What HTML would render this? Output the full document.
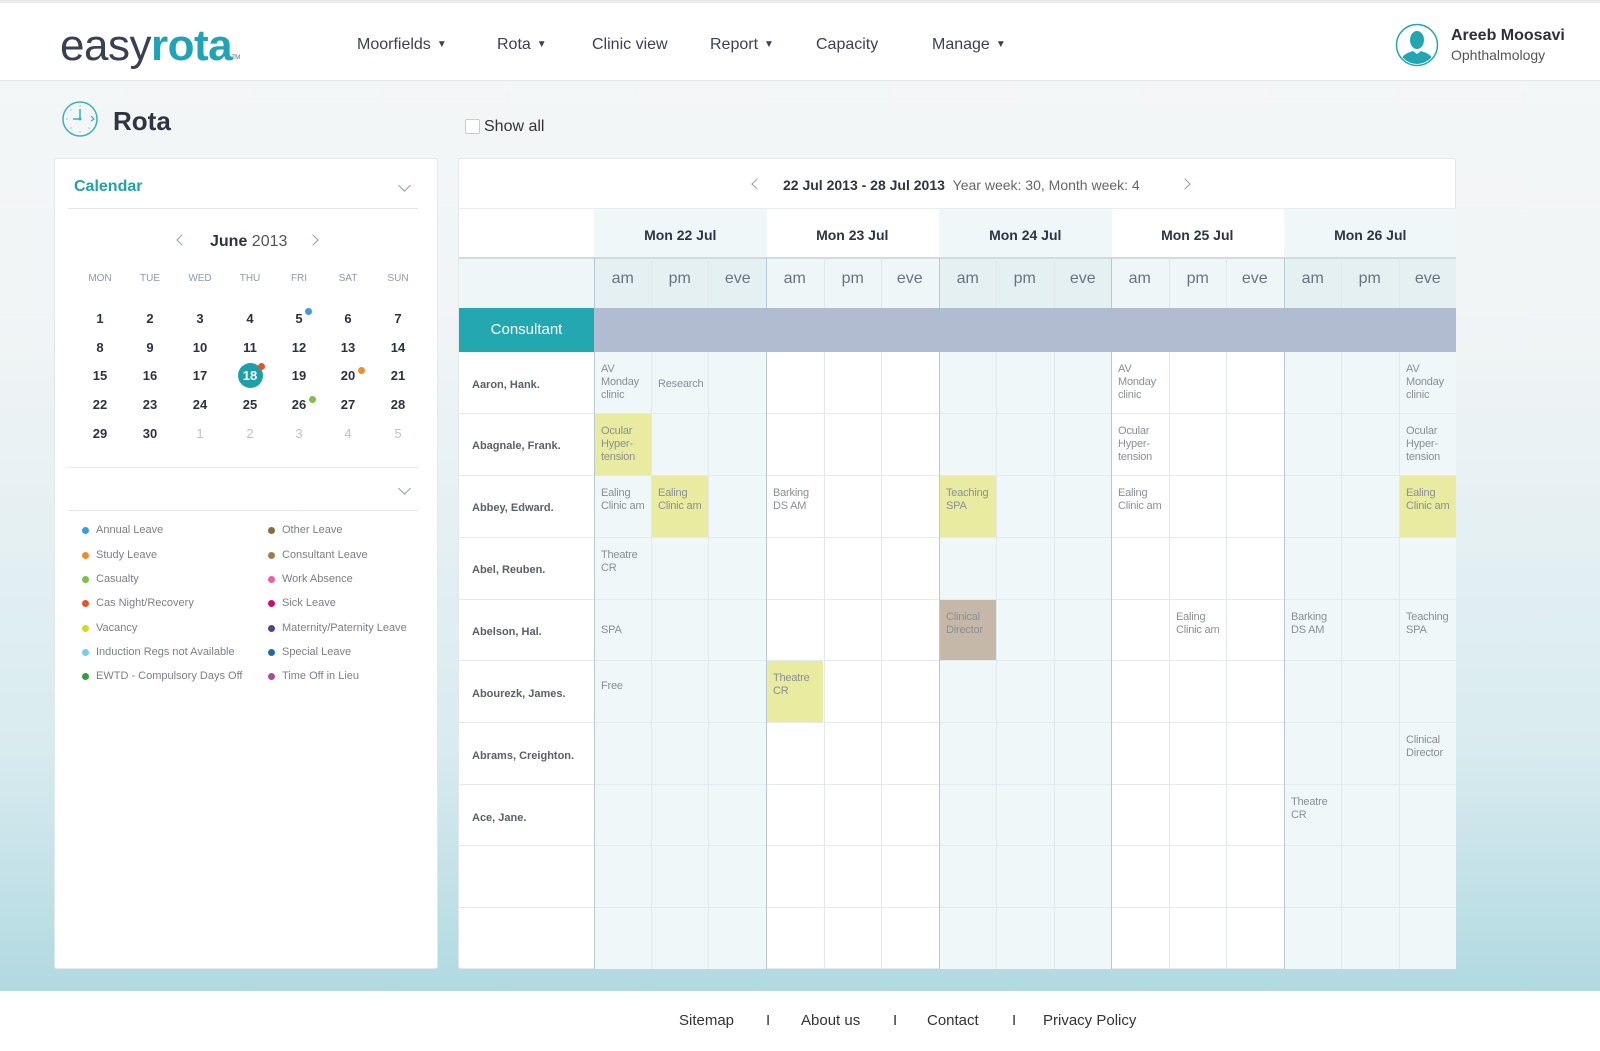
<!DOCTYPE html>
<html><head><meta charset="utf-8"><style>
*{margin:0;padding:0;box-sizing:border-box}
body{width:1600px;height:1051px;overflow:hidden;font-family:"Liberation Sans",Arial,sans-serif;background:linear-gradient(#f4f6f7 0px,#f2f5f6 300px,#d8ebef 750px,#b1d9e1 991px);position:relative;color:#333}
.a{position:absolute}
#top{left:0;top:0;width:1600px;height:3px;background:#e9ecee}
#hdr{left:0;top:3px;width:1600px;height:78px;background:#fff;border-bottom:1px solid #e3e7ea}
.nav{top:36px;font-size:16px;color:#3c4150;white-space:nowrap}
.nav i{font-style:normal;font-size:10px;margin-left:6px;position:relative;top:-2px}
.panel{background:#fff;border:1px solid #e2e8eb;border-radius:3px}
.dw{font-size:10px;color:#8d9aaa;width:40px;text-align:center;top:273px}
.dn{font-size:13px;color:#2d3240;width:40px;text-align:center;font-weight:bold}
.dn.g{color:#bcc2c8;font-weight:normal}
.dot{width:7px;height:7px;border-radius:50%}
.lg{font-size:11px;color:#7a8088;white-space:nowrap}
.lg b{position:absolute;left:-14px;top:3px;width:7px;height:7px;border-radius:50%}
.c{font-size:11px;line-height:13px;color:#8a8f95;padding:11px 3px 0 6px;overflow:hidden;letter-spacing:-0.2px}
.nm{font-size:11px;font-weight:bold;color:#5a6068;left:472px}
.sh{font-size:16px;color:#6c7280;width:57.5px;text-align:center;top:270px}
.dh{font-size:14px;font-weight:bold;color:#2f3442;width:172.5px;text-align:center;top:227px}
.chev{width:9px;height:9px;border-right:1.5px solid #8ba0ad;border-bottom:1.5px solid #8ba0ad;transform:rotate(45deg)}
.ft{top:1012px;font-size:15px;color:#333}
</style></head><body>
<div class="a" id="top"></div>
<div class="a" id="hdr"></div>
<div class="a" style="left:60px;top:18px;font-size:44px;line-height:56px;white-space:nowrap;letter-spacing:-0.5px"><span style="color:#3a3f52;font-weight:normal">easy</span><span style="color:#1fa3b6;font-weight:bold">rota</span><span style="font-size:6px;color:#666;vertical-align:top;position:relative;top:12px">TM</span></div>
<div class="a nav" style="left:357px">Moorfields<i>▼</i></div>
<div class="a nav" style="left:497px">Rota<i>▼</i></div>
<div class="a nav" style="left:592px">Clinic view</div>
<div class="a nav" style="left:710px">Report<i>▼</i></div>
<div class="a nav" style="left:816px">Capacity</div>
<div class="a nav" style="left:932px">Manage<i>▼</i></div>
<svg class="a" style="left:1395px;top:23px" width="44" height="44" viewBox="0 0 44 44"><defs><clipPath id="cp"><circle cx="22" cy="22" r="19"/></clipPath></defs><circle cx="22" cy="22" r="20.5" fill="#fff" stroke="#21a6b2" stroke-width="1.5"/><g clip-path="url(#cp)" fill="#21a6b2"><ellipse cx="22" cy="17" rx="7" ry="9"/><path d="M4 44 C5 32 12 30 18 28 L22 31 L26 28 C32 30 39 32 40 44Z"/></g></svg>
<div class="a" style="left:1451px;top:27px;font-size:16px;font-weight:bold;color:#2c303c">Areeb Moosavi</div>
<div class="a" style="left:1451px;top:47px;font-size:14px;color:#555">Ophthalmology</div>

<svg class="a" style="left:61px;top:100px" width="38" height="38" viewBox="0 0 38 38"><circle cx="19" cy="19" r="17" fill="none" stroke="#3fb0b0" stroke-width="1.5"/><path d="M19 9 V19 H12" fill="none" stroke="#3fb0b0" stroke-width="1.5"/><circle cx="19" cy="19" r="1.5" fill="#3fb0b0"/><g fill="#9cc"><circle cx="19" cy="6" r=".8"/><circle cx="19" cy="32" r=".8"/><circle cx="6" cy="19" r=".8"/><circle cx="10" cy="10" r=".8"/><circle cx="28" cy="28" r=".8"/><circle cx="10" cy="28" r=".8"/></g><path d="M30 16 l3 3 l-3 2" fill="none" stroke="#3fb0b0" stroke-width="1.2"/></svg>
<div class="a" style="left:113px;top:106px;font-size:26px;font-weight:bold;color:#2f3444">Rota</div>
<div class="a" style="left:465px;top:119px;width:15px;height:15px;border:1px solid #c6ccd1;border-radius:2px;background:#fff"></div>
<div class="a" style="left:484px;top:118px;font-size:16px;color:#333">Show all</div>

<!-- Left panel -->
<div class="a panel" style="left:54px;top:158px;width:384px;height:811px"></div>
<div class="a" style="left:74px;top:178px;font-size:16px;font-weight:bold;color:#21a2ab">Calendar</div>
<div class="a chev" style="left:400px;top:181px"></div>
<div class="a" style="left:68px;top:208px;width:350px;height:1px;background:#e3e8eb"></div>
<div class="a" style="left:178px;top:236px;width:8px;height:8px;border-left:1.5px solid #8ba0ad;border-bottom:1.5px solid #8ba0ad;transform:rotate(45deg)"></div>
<div class="a" style="left:210px;top:233px;font-size:16px;color:#2f3442"><b>June</b> <span style="color:#555">2013</span></div>
<div class="a" style="left:309px;top:236px;width:8px;height:8px;border-right:1.5px solid #8ba0ad;border-top:1.5px solid #8ba0ad;transform:rotate(45deg)"></div>
<div class="a dw" style="left:80px">MON</div><div class="a dw" style="left:130px">TUE</div><div class="a dw" style="left:180px">WED</div><div class="a dw" style="left:230px">THU</div><div class="a dw" style="left:279px">FRI</div><div class="a dw" style="left:328px">SAT</div><div class="a dw" style="left:378px">SUN</div>
<div class="a dn" style="left:80px;top:311px">1</div><div class="a dn" style="left:130px;top:311px">2</div><div class="a dn" style="left:180px;top:311px">3</div><div class="a dn" style="left:230px;top:311px">4</div><div class="a dn" style="left:279px;top:311px">5</div><div class="a dn" style="left:328px;top:311px">6</div><div class="a dn" style="left:378px;top:311px">7</div>
<div class="a dn" style="left:80px;top:340px">8</div><div class="a dn" style="left:130px;top:340px">9</div><div class="a dn" style="left:180px;top:340px">10</div><div class="a dn" style="left:230px;top:340px">11</div><div class="a dn" style="left:279px;top:340px">12</div><div class="a dn" style="left:328px;top:340px">13</div><div class="a dn" style="left:378px;top:340px">14</div>
<div class="a" style="left:238px;top:363px;width:25px;height:25px;border-radius:50%;background:#1f9fa8"></div>
<div class="a dn" style="left:80px;top:368px">15</div><div class="a dn" style="left:130px;top:368px">16</div><div class="a dn" style="left:180px;top:368px">17</div><div class="a dn" style="left:230px;top:368px;color:#fff">18</div><div class="a dn" style="left:279px;top:368px">19</div><div class="a dn" style="left:328px;top:368px">20</div><div class="a dn" style="left:378px;top:368px">21</div>
<div class="a dn" style="left:80px;top:397px">22</div><div class="a dn" style="left:130px;top:397px">23</div><div class="a dn" style="left:180px;top:397px">24</div><div class="a dn" style="left:230px;top:397px">25</div><div class="a dn" style="left:279px;top:397px">26</div><div class="a dn" style="left:328px;top:397px">27</div><div class="a dn" style="left:378px;top:397px">28</div>
<div class="a dn" style="left:80px;top:426px">29</div><div class="a dn" style="left:130px;top:426px">30</div><div class="a dn g" style="left:180px;top:426px">1</div><div class="a dn g" style="left:230px;top:426px">2</div><div class="a dn g" style="left:279px;top:426px">3</div><div class="a dn g" style="left:328px;top:426px">4</div><div class="a dn g" style="left:378px;top:426px">5</div>
<div class="a dot" style="left:305px;top:308px;background:#3a9de0"></div>
<div class="a dot" style="left:258px;top:363px;background:#e2572a"></div>
<div class="a dot" style="left:358px;top:367px;background:#f08c2a"></div>
<div class="a dot" style="left:309px;top:396px;background:#7cc043"></div>
<div class="a" style="left:68px;top:467px;width:350px;height:1px;background:#e3e8eb"></div>
<div class="a chev" style="left:400px;top:484px"></div>
<div class="a" style="left:68px;top:510px;width:350px;height:1px;background:#e3e8eb"></div>
<div class="a lg" style="left:96px;top:524px"><b style="background:#3a9de0"></b>Annual Leave</div>
<div class="a lg" style="left:96px;top:549px"><b style="background:#f08c2a"></b>Study Leave</div>
<div class="a lg" style="left:96px;top:573px"><b style="background:#7cc043"></b>Casualty</div>
<div class="a lg" style="left:96px;top:597px"><b style="background:#e2572a"></b>Cas Night/Recovery</div>
<div class="a lg" style="left:96px;top:622px"><b style="background:#d8d820"></b>Vacancy</div>
<div class="a lg" style="left:96px;top:646px"><b style="background:#7ec8ea"></b>Induction Regs not Available</div>
<div class="a lg" style="left:96px;top:670px"><b style="background:#3a9a3a"></b>EWTD - Compulsory Days Off</div>
<div class="a lg" style="left:282px;top:524px"><b style="background:#8b6a3e"></b>Other Leave</div>
<div class="a lg" style="left:282px;top:549px"><b style="background:#a47c4e"></b>Consultant Leave</div>
<div class="a lg" style="left:282px;top:573px"><b style="background:#ec5fa8"></b>Work Absence</div>
<div class="a lg" style="left:282px;top:597px"><b style="background:#c8106a"></b>Sick Leave</div>
<div class="a lg" style="left:282px;top:622px"><b style="background:#5a3d8c"></b>Maternity/Paternity Leave</div>
<div class="a lg" style="left:282px;top:646px"><b style="background:#2266b0"></b>Special Leave</div>
<div class="a lg" style="left:282px;top:670px"><b style="background:#a84b9a"></b>Time Off in Lieu</div>

<!-- Right panel -->
<div class="a panel" style="left:458px;top:158px;width:998px;height:811px;overflow:hidden">
</div>
<div class="a" style="left:753px;top:180px;width:8px;height:8px;border-left:1.5px solid #8ba0ad;border-bottom:1.5px solid #8ba0ad;transform:rotate(45deg)"></div>
<div class="a" style="left:783px;top:177px;font-size:14px;color:#2f3442;white-space:nowrap"><b>22 Jul 2013 - 28 Jul 2013</b> <span style="color:#666">&nbsp;Year week: 30, Month week: 4</span></div>
<div class="a" style="left:1181px;top:180px;width:8px;height:8px;border-right:1.5px solid #8ba0ad;border-top:1.5px solid #8ba0ad;transform:rotate(45deg)"></div>
<div class="a" style="left:459px;top:208px;width:996px;height:1px;background:#e8edef"></div>
<div class="a" style="left:594px;top:209px;width:172.5px;height:760px;background:#eff7f9"></div>
<div class="a" style="left:939px;top:209px;width:172.5px;height:760px;background:#eff7f9"></div>
<div class="a" style="left:1284px;top:209px;width:172px;height:760px;background:#eff7f9"></div>
<div class="a" style="left:459px;top:258px;width:997px;height:50px;background:#eef6f8"></div>
<div class="a" style="left:594px;top:258px;width:172.5px;height:50px;background:#e5f0f2"></div>
<div class="a" style="left:939px;top:258px;width:172.5px;height:50px;background:#e5f0f2"></div>
<div class="a" style="left:1284px;top:258px;width:172px;height:50px;background:#e5f0f2"></div>
<div class="a" style="left:459px;top:257px;width:997px;height:2px;background:#cfdbe0"></div>
<div class="a" style="left:459px;top:413px;width:997px;height:1px;background:#e4eaed"></div>
<div class="a" style="left:459px;top:475px;width:997px;height:1px;background:#e4eaed"></div>
<div class="a" style="left:459px;top:537px;width:997px;height:1px;background:#e4eaed"></div>
<div class="a" style="left:459px;top:599px;width:997px;height:1px;background:#e4eaed"></div>
<div class="a" style="left:459px;top:660px;width:997px;height:1px;background:#e4eaed"></div>
<div class="a" style="left:459px;top:722px;width:997px;height:1px;background:#e4eaed"></div>
<div class="a" style="left:459px;top:784px;width:997px;height:1px;background:#e4eaed"></div>
<div class="a" style="left:459px;top:845px;width:997px;height:1px;background:#e4eaed"></div>
<div class="a" style="left:459px;top:907px;width:997px;height:1px;background:#e4eaed"></div>
<div class="a c" style="left:595px;top:414px;width:56px;height:61px;background:#e9eba0">Ocular Hyper-tension</div>
<div class="a c" style="left:652px;top:476px;width:56px;height:61px;background:#e9eba0">Ealing Clinic am</div>
<div class="a c" style="left:940px;top:476px;width:56px;height:61px;background:#e9eba0">Teaching SPA</div>
<div class="a c" style="left:1400px;top:476px;width:56px;height:61px;background:#e9eba0">Ealing Clinic am</div>
<div class="a c" style="left:940px;top:600px;width:56px;height:60px;background:#c6b8a8">Clinical Director</div>
<div class="a c" style="left:767px;top:661px;width:56px;height:61px;background:#e9eba0">Theatre CR</div>
<div class="a" style="left:651px;top:258px;width:1px;height:711px;background:#e1e9ec"></div>
<div class="a" style="left:708px;top:258px;width:1px;height:711px;background:#e1e9ec"></div>
<div class="a" style="left:824px;top:258px;width:1px;height:711px;background:#e1e9ec"></div>
<div class="a" style="left:881px;top:258px;width:1px;height:711px;background:#e1e9ec"></div>
<div class="a" style="left:996px;top:258px;width:1px;height:711px;background:#e1e9ec"></div>
<div class="a" style="left:1054px;top:258px;width:1px;height:711px;background:#e1e9ec"></div>
<div class="a" style="left:1169px;top:258px;width:1px;height:711px;background:#e1e9ec"></div>
<div class="a" style="left:1226px;top:258px;width:1px;height:711px;background:#e1e9ec"></div>
<div class="a" style="left:1341px;top:258px;width:1px;height:711px;background:#e1e9ec"></div>
<div class="a" style="left:1399px;top:258px;width:1px;height:711px;background:#e1e9ec"></div>
<div class="a" style="left:594px;top:258px;width:1px;height:711px;background:#b9c9d1"></div>
<div class="a" style="left:766px;top:258px;width:1px;height:711px;background:#b9c9d1"></div>
<div class="a" style="left:939px;top:258px;width:1px;height:711px;background:#b9c9d1"></div>
<div class="a" style="left:1111px;top:258px;width:1px;height:711px;background:#b9c9d1"></div>
<div class="a" style="left:1284px;top:258px;width:1px;height:711px;background:#b9c9d1"></div>
<div class="a" style="left:459px;top:308px;width:135px;height:44px;background:#23a8b1;color:#fff;font-size:15px;text-align:center;line-height:44px">Consultant</div>
<div class="a" style="left:594px;top:308px;width:862px;height:44px;background:#b2bcd0"></div>
<div class="a dh" style="left:594px">Mon 22 Jul</div><div class="a dh" style="left:766px">Mon 23 Jul</div><div class="a dh" style="left:939px">Mon 24 Jul</div><div class="a dh" style="left:1111px">Mon 25 Jul</div><div class="a dh" style="left:1284px">Mon 26 Jul</div>
<div class="a sh" style="left:594px">am</div><div class="a sh" style="left:651px">pm</div><div class="a sh" style="left:709px">eve</div>
<div class="a sh" style="left:766px">am</div><div class="a sh" style="left:824px">pm</div><div class="a sh" style="left:881px">eve</div>
<div class="a sh" style="left:939px">am</div><div class="a sh" style="left:996px">pm</div><div class="a sh" style="left:1054px">eve</div>
<div class="a sh" style="left:1111px">am</div><div class="a sh" style="left:1169px">pm</div><div class="a sh" style="left:1226px">eve</div>
<div class="a sh" style="left:1284px">am</div><div class="a sh" style="left:1341px">pm</div><div class="a sh" style="left:1399px">eve</div>
<div class="a nm" style="top:379px">Aaron, Hank.</div>
<div class="a nm" style="top:440px">Abagnale, Frank.</div>
<div class="a nm" style="top:502px">Abbey, Edward.</div>
<div class="a nm" style="top:564px">Abel, Reuben.</div>
<div class="a nm" style="top:626px">Abelson, Hal.</div>
<div class="a nm" style="top:688px">Abourezk, James.</div>
<div class="a nm" style="top:750px">Abrams, Creighton.</div>
<div class="a nm" style="top:812px">Ace, Jane.</div>
<div class="a c" style="left:595px;top:352px;width:56px">AV Monday clinic</div>
<div class="a c" style="left:652px;top:378px;width:60px;padding-top:0">Research</div>
<div class="a c" style="left:1112px;top:352px;width:56px">AV Monday clinic</div>
<div class="a c" style="left:1400px;top:352px;width:56px">AV Monday clinic</div>
<div class="a c" style="left:1112px;top:414px;width:56px">Ocular Hyper- tension</div>
<div class="a c" style="left:1400px;top:414px;width:56px">Ocular Hyper- tension</div>
<div class="a c" style="left:595px;top:476px;width:60px">Ealing Clinic am</div>
<div class="a c" style="left:767px;top:476px;width:56px">Barking DS AM</div>
<div class="a c" style="left:1112px;top:476px;width:60px">Ealing Clinic am</div>
<div class="a c" style="left:595px;top:538px;width:56px">Theatre CR</div>
<div class="a c" style="left:595px;top:624px;width:56px;padding-top:0">SPA</div>
<div class="a c" style="left:1170px;top:600px;width:60px">Ealing Clinic am</div>
<div class="a c" style="left:1285px;top:600px;width:56px">Barking DS AM</div>
<div class="a c" style="left:1400px;top:600px;width:56px">Teaching SPA</div>
<div class="a c" style="left:595px;top:680px;width:56px;padding-top:0">Free</div>
<div class="a c" style="left:1400px;top:723px;width:56px">Clinical Director</div>
<div class="a c" style="left:1285px;top:785px;width:56px">Theatre CR</div>

<div class="a" style="left:0;top:991px;width:1600px;height:60px;background:#fff"></div>
<div class="a ft" style="left:679px">Sitemap</div>
<div class="a ft" style="left:766px">I</div>
<div class="a ft" style="left:801px">About us</div>
<div class="a ft" style="left:893px">I</div>
<div class="a ft" style="left:927px">Contact</div>
<div class="a ft" style="left:1012px">I</div>
<div class="a ft" style="left:1043px">Privacy Policy</div>
</body></html>
